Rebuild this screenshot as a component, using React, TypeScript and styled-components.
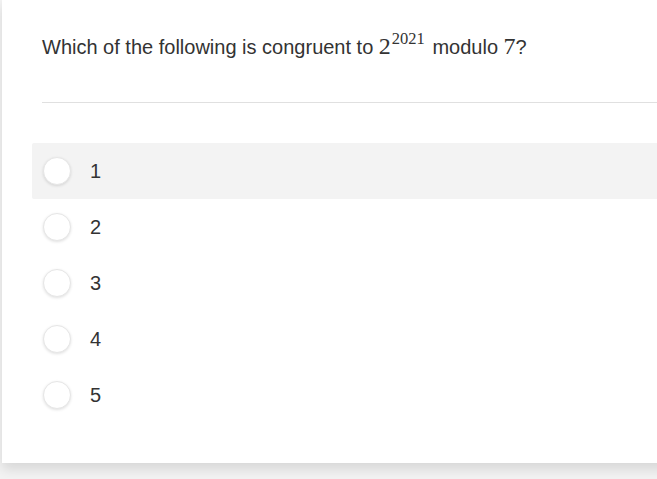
import styled, { createGlobalStyle } from "styled-components";

const GlobalStyle = createGlobalStyle`
  html {
    overflow: hidden;
    background: #f3f3f3;
  }
  body {
    margin: 0;
    padding: 0;
    min-height: 100vh;
    background: #f3f3f3;
  }
`;

const options = ["1", "2", "3", "4", "5"];

export default function App() {
  return (
    <>
      <GlobalStyle />
      <Card>
        <Question>
          Which of the following is congruent to{" "}
          <MathText>
            2<Sup>2021</Sup>
          </MathText>{" "}
          modulo <MathText>7</MathText>?
        </Question>
        <Divider />
        <OptionList>
          {options.map((opt, i) => (
            <OptionRow key={opt} $active={i === 0}>
              <Radio />
              <OptionLabel>{opt}</OptionLabel>
            </OptionRow>
          ))}
        </OptionList>
      </Card>
    </>
  );
}

const Card = styled.div`
  background: #fff;
  margin-left: 2px;
  width: 720px;
  height: 463px;
  box-sizing: border-box;
  padding: 30px 0 0 40px;
  box-shadow: 0 6px 12px rgba(0, 0, 0, 0.12);
  font-family: "Liberation Sans", Arial, sans-serif;
  color: #333;
`;

const Question = styled.div`
  font-size: 20px;
  line-height: 32px;
  height: 32px;
`;

const MathText = styled.span`
  font-family: "Liberation Serif", "DejaVu Serif", serif;
  font-size: 24px;
`;

const Sup = styled.sup`
  font-size: 16.5px;
  vertical-align: 10px;
  line-height: 0;
  margin-left: 1px;
  margin-right: 2px;
`;

const Divider = styled.div`
  height: 1px;
  background: #e0e0e0;
  margin-top: 40px;
`;

const OptionList = styled.div`
  margin-top: 40px;
  margin-left: -10px;
`;

const OptionRow = styled.div<{ $active?: boolean }>`
  display: flex;
  align-items: center;
  height: 56px;
  padding-left: 11px;
  border-radius: 2px;
  background: ${(p) => (p.$active ? "#f3f3f3" : "transparent")};
`;

const Radio = styled.div`
  width: 26px;
  height: 26px;
  border-radius: 50%;
  background: #fff;
  border: 1px solid #e6e6e6;
  box-shadow: 0 1px 3px rgba(0, 0, 0, 0.12);
`;

const OptionLabel = styled.span`
  margin-left: 19px;
  font-size: 20px;
  color: #333;
`;
